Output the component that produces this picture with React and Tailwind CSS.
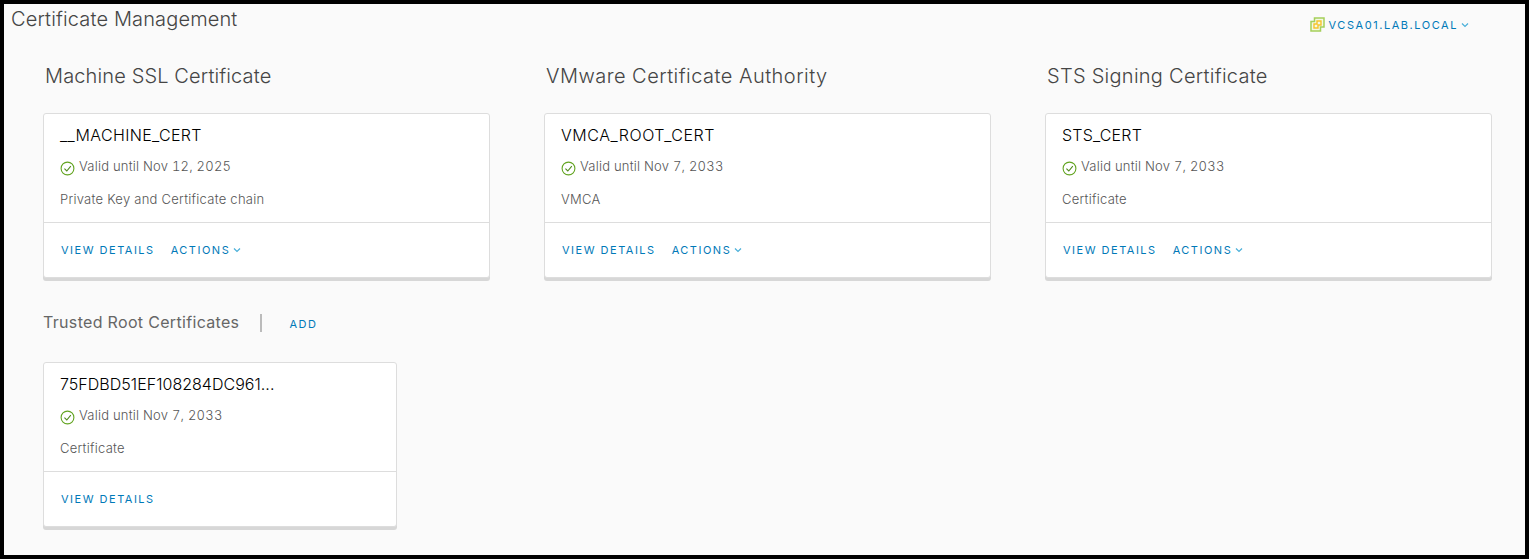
import React from 'react';

const fontClass = "font-['Inter','Liberation_Sans',sans-serif]";

const ValidIcon = () => (
    <svg width="15" height="15" viewBox="0 0 15 15" fill="none" className="shrink-0 mt-[4px]">
        <circle cx="7.5" cy="7.5" r="6.4" stroke="#62a420" strokeWidth="1.1" />
        <path d="M4.4 7.6 L6.8 10 L10.8 5.2" stroke="#4f8a1c" strokeWidth="1.1" />
    </svg>
);

const Chevron = () => (
    <svg width="8" height="6" viewBox="0 0 8 6" fill="none" className="ml-[3px]">
        <path d="M1 1.5 L4 4.5 L7 1.5" stroke="#49afd9" strokeWidth="1.2" />
    </svg>
);

const VcenterIcon = () => (
    <svg width="15" height="15" viewBox="0 0 15 15" fill="none">
        <path d="M4.5 1 H14 V10 H10.5 V14 H1 V4.5 H4.5 Z" fill="#f3f8e4" stroke="#a5cf5a" strokeWidth="1.5" />
        <path d="M7 4 H11 V8 H8 V11 H4 V7 H7 Z" fill="none" stroke="#f5c32c" strokeWidth="1.4" />
    </svg>
);

const LinkText = ({ children }) => (
    <span className="text-[11px] leading-[14px] font-normal tracking-[1.5px] text-[#0079b8]">{children}</span>
);

const CertCard = ({ name, nameTracking, expires, type, actions, className }) => (
    <div className={`bg-white border border-[#dddddd] rounded-[3px] shadow-[0_3px_0_#d7d7d7] ${className}`}>
        <div className="h-[109px] pl-4 pt-[11px] border-b border-[#dddddd]">
            <div className={`text-[16px] leading-[20px] font-light text-black ${nameTracking}`}>{name}</div>
            <div className="flex items-start gap-[4px] mt-[12px] text-[13px] leading-[18px] font-light tracking-[0.22px] tabular-nums text-[#565656]">
                <ValidIcon />
                <span>Valid until {expires}</span>
            </div>
            <div className="mt-[14px] text-[13px] leading-[18px] font-light tracking-[0.25px] text-[#565656]">{type}</div>
        </div>
        <div className="h-[54px] pl-[17px] flex items-center gap-4">
            <LinkText>VIEW DETAILS</LinkText>
            {actions && (
                <span className="flex items-center">
                    <LinkText>ACTIONS</LinkText>
                    <Chevron />
                </span>
            )}
        </div>
    </div>
);

const sections = [
    { title: 'Machine SSL Certificate', tracking: 'tracking-[0.13px]', name: '__MACHINE_CERT', nameTracking: 'tracking-[0.35px]', expires: 'Nov 12, 2025', type: 'Private Key and Certificate chain' },
    { title: 'VMware Certificate Authority', tracking: 'tracking-[0.47px]', name: 'VMCA_ROOT_CERT', nameTracking: 'tracking-[0.55px]', expires: 'Nov 7, 2033', type: 'VMCA' },
    { title: 'STS Signing Certificate', tracking: 'tracking-[0.27px]', name: 'STS_CERT', nameTracking: 'tracking-[0.2px]', expires: 'Nov 7, 2033', type: 'Certificate' },
];

export default function App() {
    return (
        <div className={`w-[1529px] h-[559px] overflow-hidden border-4 border-black bg-[#fafafa] ${fontClass}`}>
            <div className="flex items-start justify-between h-[61px]">
                <h1 className="ml-[7px] mt-[2px] text-[20px] leading-[26px] font-light tracking-[0.14px] text-[#454545]">Certificate Management</h1>
                <div className="flex items-center mt-[13px] mr-[56px]">
                    <VcenterIcon />
                    <span className="ml-[4px] text-[11px] leading-[14px] tracking-[1.55px] text-[#0079b8]">VCSA01.LAB.LOCAL</span>
                    <Chevron />
                </div>
            </div>
            <div className="flex gap-[54px] ml-[39px]">
                {sections.map((s) => (
                    <div key={s.name} className="w-[447px]">
                        <h2 className={`ml-[2px] text-[20px] leading-[22px] font-light text-[#454545] ${s.tracking}`}>{s.title}</h2>
                        <CertCard className="mt-[26px]" name={s.name} nameTracking={s.nameTracking} expires={s.expires} type={s.type} actions />
                    </div>
                ))}
            </div>
            <div className="flex items-center ml-[39px] mt-[33px] h-[22px]">
                <h3 className="text-[16px] leading-[20px] font-normal tracking-[0.32px] text-[#666666]">Trusted Root Certificates</h3>
                <div className="w-[2px] h-[18px] mt-[2px] bg-[#bbbbbb] ml-[21px]"></div>
                <span className="ml-[27px]"><LinkText>ADD</LinkText></span>
            </div>
            <CertCard className="w-[354px] ml-[39px] mt-[29px]" name="75FDBD51EF108284DC961..." nameTracking="tracking-[0.03px]" expires="Nov 7, 2033" type="Certificate" />
        </div>
    );
}
